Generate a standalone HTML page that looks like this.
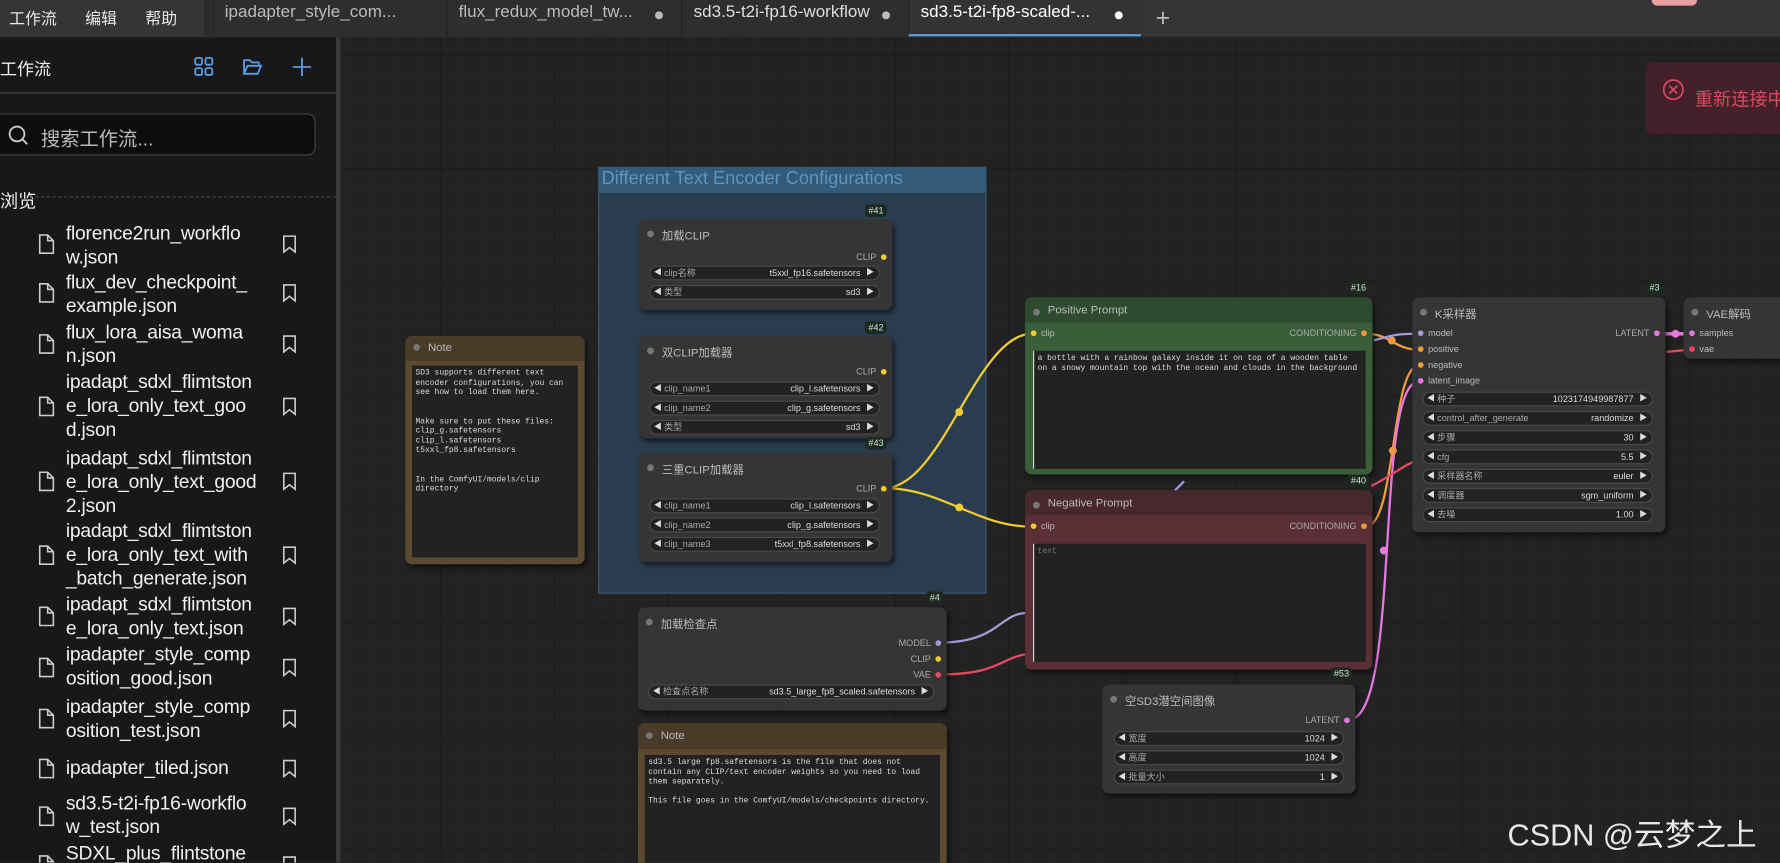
<!DOCTYPE html>
<html><head><meta charset="utf-8"><style>
*{margin:0;padding:0;box-sizing:border-box}
html,body{width:1780px;height:863px;overflow:hidden;background:#222}
#s{position:absolute;left:0;top:0;width:1568px;height:760px;transform:scale(1.13521);transform-origin:0 0;font-family:"Liberation Sans","Noto Sans CJK SC",sans-serif;overflow:hidden}
.a{position:absolute}
#top{left:0;top:0;width:1568px;height:33px;background:#353535;border-bottom:1px solid #2a2a2a}
.menu{color:#e8e8e8;font-size:14px;top:6px}
.tab{top:0;height:32px;border-left:1px solid #222;color:#bbb;font-size:15px;padding:2px 10px;white-space:nowrap;background:#2e2e2e}
.tab .d{position:absolute;right:16px;top:10px;width:7px;height:7px;border-radius:50%;background:#bbb}
#side{left:0;top:33px;width:296px;height:727px;background:#18181b}
#sb{left:296px;top:33px;width:4px;height:727px;background:#3a3a3a}
#canvas{left:300px;top:33px;width:1268px;height:727px;background-color:#222;
background-image:linear-gradient(#1b1b1b 1px,transparent 1px),linear-gradient(90deg,#1b1b1b 1px,transparent 1px),linear-gradient(#262626 1px,transparent 1px),linear-gradient(90deg,#262626 1px,transparent 1px);
background-size:100px 100px,100px 100px,20px 20px,20px 20px;background-position:-12px 15px,-12px 15px,-12px 15px,-12px 15px}
.it{left:58px;color:#f0f0f0;font-size:17px;line-height:21px;white-space:nowrap;letter-spacing:-0.2px}
.node{background:#353535;border-radius:6px;box-shadow:2px 3px 4px rgba(0,0,0,.5)}
.tt{color:#bbb;font-size:10px;position:absolute;left:20px;top:6px;white-space:nowrap}
.dot{position:absolute;left:7px;top:10px;width:6px;height:6px;border-radius:50%;background:#777}
.badge{background:#1a2a20;color:#ddd;font-size:8px;padding:1px 3px;border-radius:3px}
.out{position:absolute;font-size:8px;color:#aaa;right:14px;text-align:right}
.out i,.in i{position:absolute;width:5px;height:5px;border-radius:50%;top:2px}
.out i{right:-9px}
.in{position:absolute;font-size:8px;color:#bbb;left:14px}
.in i{left:-9px}
.w{position:absolute;height:13px;background:#222;border:1px solid #4a4a4a;border-radius:7px;font-size:8px;color:#aaa;line-height:11px;padding:0 16px 0 12px}
.w:before{content:"◀";position:absolute;left:3px;color:#ddd;font-size:7px}
.w:after{content:"▶";position:absolute;right:4px;color:#ddd;font-size:7px}
.w b{font-weight:normal;float:right;color:#ddd}
.ta{position:absolute;background:#222;font-family:"Liberation Mono","DejaVu Sans Mono",monospace;font-size:7px;line-height:8.5px;color:#ddd;padding:3px;white-space:pre}
</style></head><body><div id="s">
<div id="canvas" class="a"></div>
<div id="top" class="a"></div>
<div class="a menu" style="left:8px">工作流</div>
<div class="a menu" style="left:75px">编辑</div>
<div class="a menu" style="left:128px">帮助</div>
<div class="a" style="left:180px;top:0;width:6px;height:33px;background:#2a2a2a"></div>
<div class="a tab" style="left:187px;width:206px">ipadapter_style_com...</div>
<div class="a tab" style="left:393px;width:207px">flux_redux_model_tw...<span class="d"></span></div>
<div class="a tab" style="left:600px;width:200px;color:#ddd">sd3.5-t2i-fp16-workflow<span class="d"></span></div>
<div class="a tab" style="left:800px;width:205px;color:#fff;background:#333;border-bottom:2px solid #5b9be0">sd3.5-t2i-fp8-scaled-...<span class="d" style="background:#fff"></span></div>
<div class="a" style="left:1018px;top:7px;color:#bbb;font-size:22px;line-height:18px">+</div>
<div class="a" style="left:1455px;top:0;width:40px;height:5px;background:#e8a0a0;border-radius:0 0 6px 6px"></div>

<div id="side" class="a"></div>
<div id="sb" class="a"></div>
<div class="a" style="left:0;top:50px;color:#eee;font-size:15px">工作流</div>
<svg class="a" style="left:170px;top:49px" width="110" height="20" fill="none" stroke="#5b9be0" stroke-width="1.6">
<rect x="2" y="2" width="6" height="6" rx="1.5"/><rect x="11" y="2" width="6" height="6" rx="1.5"/><rect x="2" y="11" width="6" height="6" rx="1.5"/><rect x="11" y="11" width="6" height="6" rx="1.5"/>
<path d="M45 16V4h5l2 2h6v3M45 16l3-7h12l-3 7z"/>
<path d="M96 2v16M88 10h16"/></svg>
<div class="a" style="left:0;top:81px;width:296px;height:2px;background:#333"></div>
<div class="a" style="left:-6px;top:100px;width:284px;height:37px;background:#0d0d0f;border:1px solid #444;border-radius:7px"></div>
<svg class="a" style="left:6px;top:109px" width="20" height="20" fill="none" stroke="#ccc" stroke-width="1.6"><circle cx="9" cy="9" r="6.5"/><path d="M14 14l4 4"/></svg>
<div class="a" style="left:36px;top:108px;color:#bbb;font-size:17px">搜索工作流...</div>
<div class="a" style="left:0;top:164px;color:#eee;font-size:16px">浏览</div>
<div class="a" style="left:26px;top:173px;width:270px;border-top:1px dashed #444"></div>

<div class="a it" style="top:195px">florence2run_workflo<br>w.json</div>
<div class="a it" style="top:238px">flux_dev_checkpoint_<br>example.json</div>
<div class="a it" style="top:282px">flux_lora_aisa_woma<br>n.json</div>
<div class="a it" style="top:326px">ipadapt_sdxl_flimtston<br>e_lora_only_text_goo<br>d.json</div>
<div class="a it" style="top:393px">ipadapt_sdxl_flimtston<br>e_lora_only_text_good<br>2.json</div>
<div class="a it" style="top:457px">ipadapt_sdxl_flimtston<br>e_lora_only_text_with<br>_batch_generate.json</div>
<div class="a it" style="top:522px">ipadapt_sdxl_flimtston<br>e_lora_only_text.json</div>
<div class="a it" style="top:566px">ipadapter_style_comp<br>osition_good.json</div>
<div class="a it" style="top:612px">ipadapter_style_comp<br>osition_test.json</div>
<div class="a it" style="top:666px">ipadapter_tiled.json</div>
<div class="a it" style="top:697px">sd3.5-t2i-fp16-workflo<br>w_test.json</div>
<div class="a it" style="top:741px">SDXL_plus_flintstone</div>
<svg class="a" style="left:0;top:0" width="296" height="760" fill="none" stroke="#ccc" stroke-width="1.4">
<defs><g id="f"><path d="M35 206h7l5 5v11h-12z M42 206v5h5"/><path d="M250 207h10v14l-5-4-5 4z"/></g></defs>
<use href="#f" y="1"/><use href="#f" y="44"/><use href="#f" y="89"/><use href="#f" y="144"/><use href="#f" y="210"/><use href="#f" y="275"/><use href="#f" y="329"/><use href="#f" y="374"/><use href="#f" y="419"/><use href="#f" y="463"/><use href="#f" y="505"/><use href="#f" y="548"/>
</svg>

<!-- group -->
<div class="a" style="left:527px;top:147px;width:342px;height:376px;background:#2a3d4f;border:1px solid #3a5a75"></div>
<div class="a" style="left:527px;top:147px;width:342px;height:23px;background:#335a78"></div>
<div class="a" style="left:530px;top:149px;color:#5e94c0;font-size:16px">Different Text Encoder Configurations</div>

<!-- links -->
<svg class="a" style="left:0;top:0" width="1568" height="760" fill="none" stroke-width="2">
<path d="M828 566C880 566 880 540 905 540" stroke="#a89ad8"/>
<path d="M1035 432l8-8" stroke="#a89ad8"/>
<path d="M828 594C880 594 880 580 905 576" stroke="#e84860"/>
<path d="M779 430C830 430 860 294 909 294" stroke="#f0cc30"/>
<path d="M779 430C830 430 860 464 909 464" stroke="#f0cc30"/>
<circle cx="845" cy="363" r="3.5" fill="#f0cc30" stroke="none"/><circle cx="845" cy="447" r="3.5" fill="#f0cc30" stroke="none"/>
<path d="M1203 294C1225 294 1228 308 1250 308" stroke="#f09a40"/>
<path d="M1203 464C1230 464 1225 322 1250 322" stroke="#f09a40"/>
<path d="M1188 634C1235 634 1210 336 1250 336" stroke="#e878e0"/>
<circle cx="1219" cy="485" r="3.5" fill="#e878e0" stroke="none"/>
<circle cx="1226" cy="300" r="3.5" fill="#f09a40" stroke="none"/><circle cx="1227" cy="397" r="3.5" fill="#f09a40" stroke="none"/>
<path d="M1210 300C1230 294 1235 294 1250 294" stroke="#a89ad8"/>
<path d="M1208 428C1225 420 1235 410 1250 405" stroke="#e84860"/>
<path d="M1462 294H1489" stroke="#e878e0" stroke-width="3"/><circle cx="1476" cy="294" r="3.5" fill="#e878e0" stroke="none"/>
<path d="M1468 310L1489 308" stroke="#e84860"/>
</svg>

<!-- Note 1 -->
<div class="a node" style="left:357px;top:296px;width:158px;height:201px;background:#5c4a30"></div>
<div class="a" style="left:357px;top:296px;width:158px;height:22px;background:#4a3b28;border-radius:6px 6px 0 0"></div>
<div class="a dot" style="left:364px;top:303px"></div><div class="a tt" style="left:377px;top:301px;position:absolute">Note</div>
<div class="ta" style="left:363px;top:322px;width:146px;height:169px">SD3 supports different text
encoder configurations, you can
see how to load them here.


Make sure to put these files:
clip_g.safetensors
clip_l.safetensors
t5xxl_fp8.safetensors


In the ComfyUI/models/clip
directory</div>

<!-- 加载CLIP -->
<div class="a badge" style="left:762px;top:180px">#41</div>
<div class="a node" style="left:563px;top:193px;width:223px;height:80px"><span class="dot"></span><span class="tt">加载CLIP</span>
<div class="out" style="top:29px">CLIP<i style="background:#f0cc30"></i></div>
<div class="w" style="left:9px;top:41px;width:203px">clip名称<b>t5xxl_fp16.safetensors</b></div>
<div class="w" style="left:9px;top:58px;width:203px">类型<b>sd3</b></div></div>
<div class="a badge" style="left:762px;top:283px">#42</div>
<div class="a node" style="left:563px;top:296px;width:223px;height:90px"><span class="dot"></span><span class="tt">双CLIP加载器</span>
<div class="out" style="top:27px">CLIP<i style="background:#f0cc30"></i></div>
<div class="w" style="left:9px;top:40px;width:203px">clip_name1<b>clip_l.safetensors</b></div>
<div class="w" style="left:9px;top:57px;width:203px">clip_name2<b>clip_g.safetensors</b></div>
<div class="w" style="left:9px;top:74px;width:203px">类型<b>sd3</b></div></div>
<div class="a badge" style="left:762px;top:385px">#43</div>
<div class="a node" style="left:563px;top:399px;width:223px;height:96px"><span class="dot"></span><span class="tt">三重CLIP加载器</span>
<div class="out" style="top:27px">CLIP<i style="background:#f0cc30"></i></div>
<div class="w" style="left:9px;top:40px;width:203px">clip_name1<b>clip_l.safetensors</b></div>
<div class="w" style="left:9px;top:57px;width:203px">clip_name2<b>clip_g.safetensors</b></div>
<div class="w" style="left:9px;top:74px;width:203px">clip_name3<b>t5xxl_fp8.safetensors</b></div></div>

<!-- Positive -->
<div class="a badge" style="left:1187px;top:248px">#16</div>
<div class="a node" style="left:903px;top:262px;width:306px;height:156px;background:#3a5e3a"><div class="a" style="left:0;top:0;width:306px;height:22px;background:#2e4b30;border-radius:6px 6px 0 0"></div><span class="dot"></span><span class="tt">Positive Prompt</span>
<div class="in" style="top:27px">clip<i style="background:#f0cc30"></i></div>
<div class="out" style="top:27px;right:14px">CONDITIONING<i style="background:#f09a40"></i></div>
<div class="ta" style="left:7px;top:47px;width:293px;height:104px;border-left:1px solid #ddd">a bottle with a rainbow galaxy inside it on top of a wooden table
on a snowy mountain top with the ocean and clouds in the background</div></div>
<!-- Negative -->
<div class="a badge" style="left:1187px;top:418px">#40</div>
<div class="a node" style="left:903px;top:432px;width:306px;height:158px;background:#5a3036"><div class="a" style="left:0;top:0;width:306px;height:22px;background:#48282c;border-radius:6px 6px 0 0"></div><span class="dot"></span><span class="tt">Negative Prompt</span>
<div class="in" style="top:27px">clip<i style="background:#f0cc30"></i></div>
<div class="out" style="top:27px;right:14px">CONDITIONING<i style="background:#f09a40"></i></div>
<div class="ta" style="left:7px;top:47px;width:293px;height:104px;border-left:1px solid #ddd;color:#777">text</div></div>

<!-- K sampler -->
<div class="a badge" style="left:1450px;top:248px">#3</div>
<div class="a node" style="left:1244px;top:262px;width:223px;height:207px"><span class="dot"></span><span class="tt">K采样器</span>
<div class="in" style="top:27px">model<i style="background:#a89ad8"></i></div>
<div class="in" style="top:41px">positive<i style="background:#f09a40"></i></div>
<div class="in" style="top:55px">negative<i style="background:#f09a40"></i></div>
<div class="in" style="top:69px">latent_image<i style="background:#e878e0"></i></div>
<div class="out" style="top:27px">LATENT<i style="background:#e878e0"></i></div>
<div class="w" style="left:9px;top:83px;width:203px">种子<b>1023174949987877</b></div>
<div class="w" style="left:9px;top:100px;width:203px">control_after_generate<b>randomize</b></div>
<div class="w" style="left:9px;top:117px;width:203px">步骤<b>30</b></div>
<div class="w" style="left:9px;top:134px;width:203px">cfg<b>5.5</b></div>
<div class="w" style="left:9px;top:151px;width:203px">采样器名称<b>euler</b></div>
<div class="w" style="left:9px;top:168px;width:203px">调度器<b>sgm_uniform</b></div>
<div class="w" style="left:9px;top:185px;width:203px">去噪<b>1.00</b></div></div>
<!-- VAE decode -->
<div class="a node" style="left:1483px;top:262px;width:100px;height:54px"><span class="dot"></span><span class="tt">VAE解码</span>
<div class="in" style="top:27px">samples<i style="background:#e878e0"></i></div>
<div class="in" style="top:41px">vae<i style="background:#e84860"></i></div></div>

<!-- checkpoint -->
<div class="a badge" style="left:816px;top:521px">#4</div>
<div class="a node" style="left:562px;top:535px;width:272px;height:91px"><span class="dot"></span><span class="tt">加载检查点</span>
<div class="out" style="top:27px">MODEL<i style="background:#a89ad8"></i></div>
<div class="out" style="top:41px">CLIP<i style="background:#f0cc30"></i></div>
<div class="out" style="top:55px">VAE<i style="background:#e84860"></i></div>
<div class="w" style="left:9px;top:68px;width:252px">检查点名称<b>sd3.5_large_fp8_scaled.safetensors</b></div></div>
<!-- Note 2 -->
<div class="a node" style="left:562px;top:637px;width:272px;height:140px;background:#5c4a30"></div>
<div class="a" style="left:562px;top:637px;width:272px;height:23px;background:#4a3b28;border-radius:6px 6px 0 0"></div>
<div class="a dot" style="left:569px;top:645px"></div><div class="a tt" style="left:582px;top:643px;position:absolute">Note</div>
<div class="ta" style="left:568px;top:665px;width:260px;height:110px">sd3.5 large fp8.safetensors is the file that does not
contain any CLIP/text encoder weights so you need to load
them separately.

This file goes in the ComfyUI/models/checkpoints directory.</div>

<!-- SD3 latent -->
<div class="a badge" style="left:1172px;top:588px">#53</div>
<div class="a node" style="left:971px;top:603px;width:223px;height:96px"><span class="dot"></span><span class="tt">空SD3潜空间图像</span>
<div class="out" style="top:27px">LATENT<i style="background:#e878e0"></i></div>
<div class="w" style="left:10px;top:41px;width:203px">宽度<b>1024</b></div>
<div class="w" style="left:10px;top:58px;width:203px">高度<b>1024</b></div>
<div class="w" style="left:10px;top:75px;width:203px">批量大小<b>1</b></div></div>

<!-- toast -->
<div class="a" style="left:1450px;top:55px;width:130px;height:63px;background:#43202a;border-radius:6px"></div>
<svg class="a" style="left:1464px;top:69px" width="20" height="20" fill="none" stroke="#e04860" stroke-width="1.5"><circle cx="10" cy="10" r="8.5"/><path d="M6.5 6.5l7 7M13.5 6.5l-7 7"/></svg>
<div class="a" style="left:1493px;top:74px;color:#e04860;font-size:16px;white-space:nowrap">重新连接中</div>

<div class="a" style="left:1328px;top:714px;color:#e8e8e8;font-size:27px;white-space:nowrap">CSDN @云梦之上</div>
</div></body></html>
